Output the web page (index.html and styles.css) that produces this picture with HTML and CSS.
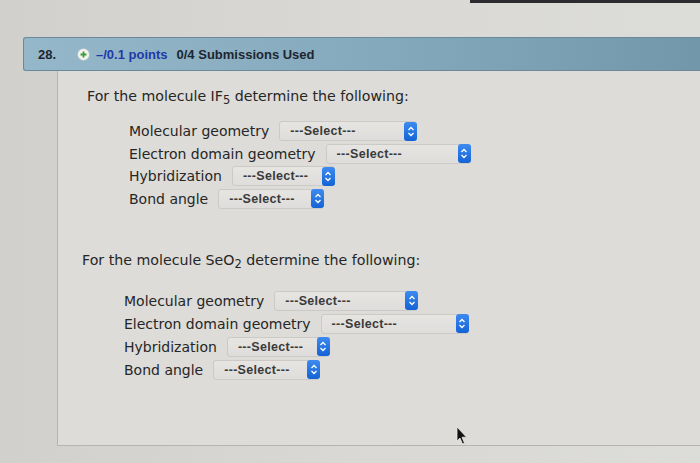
FILE: index.html
```html
<!DOCTYPE html>
<html>
<head>
<meta charset="utf-8">
<link rel="stylesheet" href="styles.css">
</head>
<body>
<div class="screen">
  <div class="topstrip"></div>
  <div class="header">
    <span class="qnum">28.</span>
    <span class="plus"><svg width="13" height="13" viewBox="0 0 13 13"><circle cx="6.5" cy="6.5" r="6" fill="#f2f3ec" stroke="#a9bcc6" stroke-width="0.8"/><path d="M6.5 3.5v6M3.5 6.5h6" stroke="#3c9a3c" stroke-width="1.8"/></svg></span>
    <span class="points">–/0.1 points</span>
    <span class="subs">0/4 Submissions Used</span>
  </div>
  <div class="box">
    <section class="part part1">
      <p class="prompt">For the molecule IF<sub>5</sub> determine the following:</p>
      <div class="rows">
        <div class="row"><span class="label">Molecular geometry</span><span class="select w136"><span class="val">---Select---</span><span class="btn"><svg width="8" height="11" viewBox="0 0 8 11"><path d="M1.5 4L4 1.5L6.5 4M1.5 7L4 9.5L6.5 7" fill="none" stroke="#fff" stroke-width="1.3"/></svg></span></span></div>
        <div class="row"><span class="label">Electron domain geometry</span><span class="select w143"><span class="val">---Select---</span><span class="btn"><svg width="8" height="11" viewBox="0 0 8 11"><path d="M1.5 4L4 1.5L6.5 4M1.5 7L4 9.5L6.5 7" fill="none" stroke="#fff" stroke-width="1.3"/></svg></span></span></div>
        <div class="row"><span class="label">Hybridization</span><span class="select w101"><span class="val">---Select---</span><span class="btn"><svg width="8" height="11" viewBox="0 0 8 11"><path d="M1.5 4L4 1.5L6.5 4M1.5 7L4 9.5L6.5 7" fill="none" stroke="#fff" stroke-width="1.3"/></svg></span></span></div>
        <div class="row"><span class="label">Bond angle</span><span class="select w104"><span class="val">---Select---</span><span class="btn"><svg width="8" height="11" viewBox="0 0 8 11"><path d="M1.5 4L4 1.5L6.5 4M1.5 7L4 9.5L6.5 7" fill="none" stroke="#fff" stroke-width="1.3"/></svg></span></span></div>
      </div>
    </section>
    <section class="part part2">
      <p class="prompt">For the molecule SeO<sub>2</sub> determine the following:</p>
      <div class="rows">
        <div class="row"><span class="label">Molecular geometry</span><span class="select w142"><span class="val">---Select---</span><span class="btn"><svg width="8" height="11" viewBox="0 0 8 11"><path d="M1.5 4L4 1.5L6.5 4M1.5 7L4 9.5L6.5 7" fill="none" stroke="#fff" stroke-width="1.3"/></svg></span></span></div>
        <div class="row"><span class="label">Electron domain geometry</span><span class="select w146"><span class="val">---Select---</span><span class="btn"><svg width="8" height="11" viewBox="0 0 8 11"><path d="M1.5 4L4 1.5L6.5 4M1.5 7L4 9.5L6.5 7" fill="none" stroke="#fff" stroke-width="1.3"/></svg></span></span></div>
        <div class="row"><span class="label">Hybridization</span><span class="select w101"><span class="val">---Select---</span><span class="btn"><svg width="8" height="11" viewBox="0 0 8 11"><path d="M1.5 4L4 1.5L6.5 4M1.5 7L4 9.5L6.5 7" fill="none" stroke="#fff" stroke-width="1.3"/></svg></span></span></div>
        <div class="row"><span class="label">Bond angle</span><span class="select w105"><span class="val">---Select---</span><span class="btn"><svg width="8" height="11" viewBox="0 0 8 11"><path d="M1.5 4L4 1.5L6.5 4M1.5 7L4 9.5L6.5 7" fill="none" stroke="#fff" stroke-width="1.3"/></svg></span></span></div>
      </div>
    </section>
    <svg class="cursor" width="12" height="19" viewBox="0 0 12 19"><path d="M1 1L1 15L4 12L6.5 18L8.5 17.2L6 11.2L10.5 11.2Z" fill="#111" stroke="#e8e8e6" stroke-width="0.8"/></svg>
  </div>
</div>
</body>
</html>
```
FILE: styles.css
```css
html, body {
  margin: 0;
  padding: 0;
}
body {
  width: 700px;
  height: 463px;
  overflow: hidden;
  background: linear-gradient(90deg, #d2d0cc 0%, #d9d8d4 50%, #dcdcd8 100%);
  font-family: "DejaVu Sans", "Open Sans", sans-serif;
  color: #2a2a2a;
}
.screen {
  display: flex;
  flex-direction: column;
}
.topstrip {
  height: 3px;
  margin-left: 470px;
  background: #2c2c30;
}
.header {
  margin-top: 34px;
  margin-left: 23px;
  height: 32px;
  display: flex;
  align-items: center;
  background: linear-gradient(90deg, #94b7c9 0%, #86aabd 50%, #7297ab 100%);
  border: 1px solid #6a8a9c;
  border-right: none;
  border-radius: 3px 0 0 3px;
  font-family: "Liberation Sans", Arial, sans-serif;
  font-weight: bold;
  font-size: 13px;
  color: #1d2630;
}
.qnum {
  margin-left: 14px;
  width: 37px;
}
.plus {
  display: flex;
  margin-left: 2px;
}
.points {
  margin-left: 6px;
  color: #1f3aa8;
}
.subs {
  margin-left: 9px;
}
.box {
  position: relative;
  margin-left: 57px;
  height: 374px;
  border-left: 1px solid #b4b4b2;
  border-bottom: 1px solid #b4b4b2;
  background: #dddcd8;
}
.part {
  display: flex;
  flex-direction: column;
}
.part1 {
  padding: 16px 0 0 29px;
}
.part2 {
  padding: 42px 0 0 24px;
}
.prompt {
  margin: 0;
  font-size: 14.2px;
  line-height: 18px;
  color: #262626;
}
.prompt sub {
  font-size: 11.5px;
  vertical-align: -3px;
  line-height: 0;
}
.rows {
  display: flex;
  flex-direction: column;
  gap: 2.5px;
  margin-top: 16px;
  padding-left: 42px;
}
.part2 .rows {
  margin-top: 22px;
  gap: 3px;
}
.row {
  display: flex;
  align-items: center;
  height: 20px;
  gap: 10px;
}
.label {
  font-size: 14px;
  color: #262626;
  white-space: nowrap;
}
.select {
  display: flex;
  align-items: center;
  justify-content: space-between;
  height: 18px;
  border: 1px solid #cbcac6;
  border-radius: 3px;
  background: linear-gradient(180deg, #e6e5e2, #dedddb);
  font-family: "Liberation Sans", Arial, sans-serif;
  font-size: 12.5px;
  letter-spacing: 0.3px;
  font-weight: bold;
  color: #3a3a3a;
}
.val {
  padding-left: 10px;
}
.btn {
  display: flex;
  align-items: center;
  justify-content: center;
  width: 13px;
  height: 19px;
  margin-right: -1px;
  border-radius: 3px;
  background: linear-gradient(180deg, #3d8bf0, #1463d6);
}
.w101 { width: 101px; }
.w104 { width: 104px; }
.w105 { width: 105px; }
.w136 { width: 136px; }
.w142 { width: 142px; }
.w143 { width: 143px; }
.w146 { width: 146px; }
.cursor {
  position: absolute;
  left: 398px;
  top: 355px;
}
```
